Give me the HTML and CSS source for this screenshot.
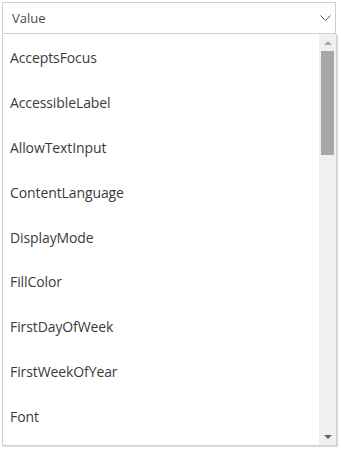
FILE: index.html
```html
<!DOCTYPE html>
<html>
<head>
    <meta charset="UTF-8">
    <link rel="stylesheet" href="styles.css">
</head>
<body>
    <div class="field">
        <span class="field-value">Value</span>
        <svg class="chevron" width="11" height="7" viewBox="0 0 11 7">
            <path d="M0.5 0.5 L5.5 5.5 L10.5 0.5" fill="none" stroke="#555" stroke-width="1"/>
        </svg>
    </div>

    <div class="dropdown">
        <ul class="options">
            <li>AcceptsFocus</li>
            <li>AccessibleLabel</li>
            <li>AllowTextInput</li>
            <li>ContentLanguage</li>
            <li>DisplayMode</li>
            <li>FillColor</li>
            <li>FirstDayOfWeek</li>
            <li>FirstWeekOfYear</li>
            <li>Font</li>
        </ul>
        <div class="scrollbar">
            <div class="arrow arrow-up"></div>
            <div class="track">
                <div class="thumb"></div>
            </div>
            <div class="arrow arrow-down"></div>
        </div>
    </div>
</body>
</html>
```

FILE: styles.css
```css
body {
    margin: 0;
    background-color: #fff;
    font-family: "Open Sans", "Noto Sans", sans-serif;
    width: 341px;
    height: 449px;
    overflow: hidden;
}

.field {
    margin: 2px 5px 0 2px;
    height: 30px;
    border: 1px solid #d0d0d0;
    display: flex;
    align-items: center;
    justify-content: space-between;
    padding: 0 4px 0 9px;
}

.field-value {
    font-size: 13px;
    color: #4a4a4a;
}

.chevron {
    margin-top: 1px;
}

.dropdown {
    margin: 0 0 0 2px;
    width: 333px;
    height: 411px;
    border: 1px solid #cfcfcf;
    border-top: none;
    display: flex;
    box-shadow: 1px 1px 1px rgba(0, 0, 0, 0.12);
}

.options {
    flex: 1;
    list-style: none;
    margin: 0;
    padding: 2px 0 0 0;
    overflow: hidden;
}

.options li {
    height: 44.875px;
    line-height: 44.875px;
    padding-left: 7px;
    font-size: 14px;
    letter-spacing: -0.1px;
    color: #3b3b3b;
    white-space: nowrap;
}

.scrollbar {
    width: 17px;
    background-color: #f0f0f0;
    display: flex;
    flex-direction: column;
}

.arrow {
    height: 17px;
    display: flex;
    align-items: center;
    justify-content: center;
}

.arrow-up::before {
    content: "";
    border-left: 4px solid transparent;
    border-right: 4px solid transparent;
    border-bottom: 4px solid #a3a3a3;
}

.arrow-down::before {
    content: "";
    border-left: 4px solid transparent;
    border-right: 4px solid transparent;
    border-top: 4px solid #606060;
}

.track {
    flex: 1;
    padding: 0 2px;
}

.thumb {
    height: 104px;
    background-color: #a6a6a6;
}
```
